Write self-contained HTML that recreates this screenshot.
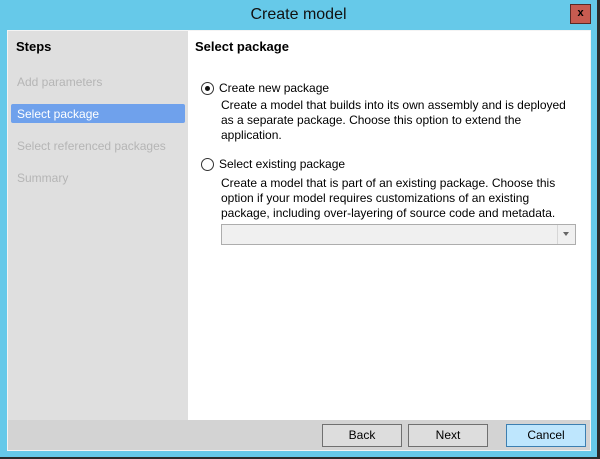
<!DOCTYPE html>
<html><head><style>
*{margin:0;padding:0;box-sizing:border-box}
body{width:600px;height:459px;background:#66c9e9;position:relative;overflow:hidden;font-family:"Liberation Sans",sans-serif;font-size:12px;color:#000}
.a{position:absolute}
</style></head><body>
<div class="a" style="left:597px;top:0;width:3px;height:459px;background:#2b2b2b"></div>
<div class="a" style="left:0;top:457px;width:600px;height:2px;background:#2b2b2b"></div>
<div class="a" style="left:0;top:6px;width:597px;text-align:center;font-size:16px;color:#111">Create model</div>
<div class="a" style="left:570px;top:4px;width:21px;height:20px;background:#c75b50;border:1px solid #5a2a26;text-align:center;font:bold 11px 'Liberation Mono',monospace;line-height:16px;padding-top:1px">x</div>
<div class="a" style="left:7px;top:30px;width:584px;height:421px;background:#fff;border:1px solid #f4f4f4"></div>
<div class="a" style="left:8px;top:31px;width:180px;height:389px;background:#dfdfdf"></div>
<div class="a" style="left:8px;top:420px;width:582px;height:30px;background:#d3d3d3"></div>
<div class="a" style="left:16px;top:39px;font-weight:bold;font-size:13px">Steps</div>
<div class="a" style="left:17px;top:75px;color:#b5b5b5">Add parameters</div>
<div class="a" style="left:11px;top:104px;width:174px;height:19px;background:#6fa1ec;border-radius:2px"></div>
<div class="a" style="left:17px;top:107px;color:#fff">Select package</div>
<div class="a" style="left:17px;top:139px;color:#b5b5b5">Select referenced packages</div>
<div class="a" style="left:17px;top:171px;color:#b5b5b5">Summary</div>
<div class="a" style="left:195px;top:39px;font-weight:bold;font-size:13px">Select package</div>
<div class="a" style="left:201px;top:82px;width:13px;height:13px;border:1px solid #333;border-radius:50%;background:#fff"><div class="a" style="left:3px;top:3px;width:5px;height:5px;border-radius:50%;background:#111"></div></div>
<div class="a" style="left:219px;top:81px">Create new package</div>
<div class="a" style="left:221px;top:98px;line-height:15px;width:360px">Create a model that builds into its own assembly and is deployed<br>as a separate package. Choose this option to extend the<br>application.</div>
<div class="a" style="left:201px;top:158px;width:13px;height:13px;border:1px solid #333;border-radius:50%;background:#fff"></div>
<div class="a" style="left:219px;top:157px">Select existing package</div>
<div class="a" style="left:221px;top:176px;line-height:15px;width:360px">Create a model that is part of an existing package. Choose this<br>option if your model requires customizations of an existing<br>package, including over-layering of source code and metadata.</div>
<div class="a" style="left:221px;top:224px;width:355px;height:21px;background:#f0f0f0;border:1px solid #adadad"></div>
<div class="a" style="left:557px;top:225px;width:1px;height:19px;background:#d6d6d6"></div>
<div class="a" style="left:563px;top:232px;width:0;height:0;border-left:3px solid transparent;border-right:3px solid transparent;border-top:4px solid #666"></div>
<div class="a" style="left:322px;top:424px;width:80px;height:23px;background:#dddddd;border:1px solid #707070;text-align:center;line-height:21px">Back</div>
<div class="a" style="left:408px;top:424px;width:80px;height:23px;background:#dddddd;border:1px solid #707070;text-align:center;line-height:21px">Next</div>
<div class="a" style="left:506px;top:424px;width:80px;height:23px;background:#bee6fd;border:1px solid #3c7fb1;text-align:center;line-height:21px">Cancel</div>
</body></html>
